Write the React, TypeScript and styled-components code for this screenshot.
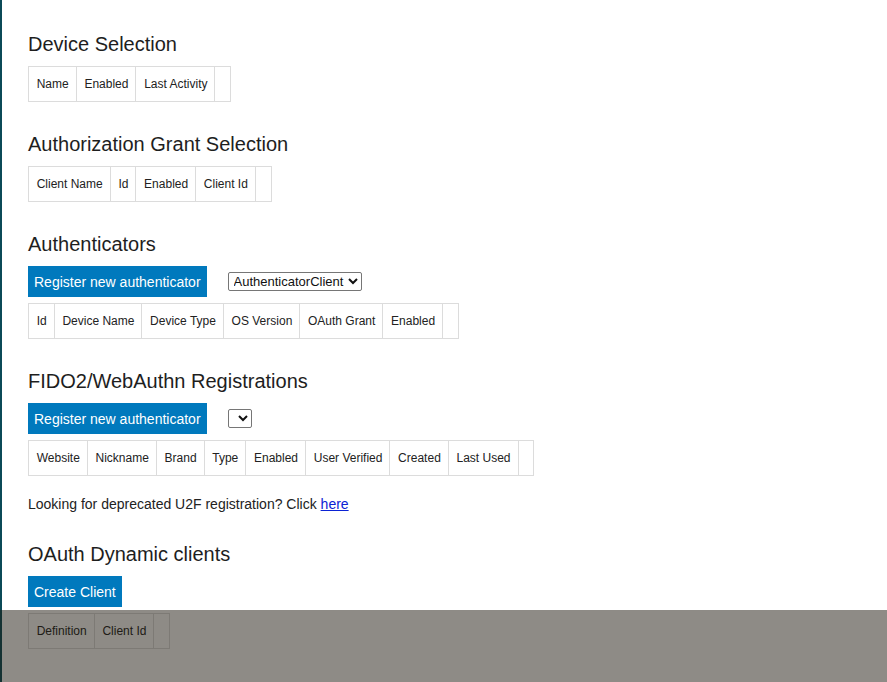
import * as React from 'react'
import styled, { createGlobalStyle } from 'styled-components'

// ___________________________________________________________________

const GlobalStyle = createGlobalStyle`
  html, body {
    margin: 0;
    padding: 0;
    background: #fff;
  }
  body {
    font-family: 'Liberation Sans', Arial, sans-serif;
    color: #222;
  }
`

type Section = {
  title: string
  columns: string[]
  button?: string
  select?: string
}

const sections: Section[] = [
  { title: 'Device Selection', columns: ['Name', 'Enabled', 'Last Activity'] },
  {
    title: 'Authorization Grant Selection',
    columns: ['Client Name', 'Id', 'Enabled', 'Client Id'],
  },
  {
    title: 'Authenticators',
    columns: ['Id', 'Device Name', 'Device Type', 'OS Version', 'OAuth Grant', 'Enabled'],
    button: 'Register new authenticator',
    select: 'AuthenticatorClient',
  },
  {
    title: 'FIDO2/WebAuthn Registrations',
    columns: [
      'Website',
      'Nickname',
      'Brand',
      'Type',
      'Enabled',
      'User Verified',
      'Created',
      'Last Used',
    ],
    button: 'Register new authenticator',
    select: '',
  },
]

const HeaderTable: React.FC<{ columns: string[] }> = ({ columns }) => (
  <Table>
    <tbody>
      <tr>
        {columns.map((c) => (
          <Cell key={c}>{c}</Cell>
        ))}
        <Cell />
      </tr>
    </tbody>
  </Table>
)

const App: React.FC = () => {
  return (
    <Page>
      <GlobalStyle />
      <Content>
        {sections.map((s) => (
          <Block key={s.title}>
            <Heading>{s.title}</Heading>
            {s.button && (
              <Actions>
                <Button>{s.button}</Button>
                <Select defaultValue={s.select}>
                  {s.select ? <option>{s.select}</option> : <option value="" />}
                </Select>
              </Actions>
            )}
            <HeaderTable columns={s.columns} />
          </Block>
        ))}
        <Note>
          Looking for deprecated U2F registration? Click <Link href="#">here</Link>
        </Note>
        <Block>
          <Heading>OAuth Dynamic clients</Heading>
          <Actions>
            <Button>Create Client</Button>
          </Actions>
          <HeaderTable columns={['Definition', 'Client Id']} />
        </Block>
      </Content>
      <Shade />
    </Page>
  )
}

export default App

// ___________________________________________________________________

const Page = styled.div`
  min-height: 100vh;
  border-left: 2px solid #0b4a57;
  box-sizing: border-box;
`

const Content = styled.div`
  display: flex;
  flex-direction: column;
  padding: 32px 26px 40px;
  gap: 30px;
`

const Block = styled.section`
  display: flex;
  flex-direction: column;
  align-items: flex-start;
`

const Heading = styled.h2`
  margin: 0 0 10px;
  font-size: 20px;
  line-height: 24px;
  font-weight: 400;
  color: #1e1e1e;
`

const Actions = styled.div`
  display: flex;
  align-items: center;
  gap: 21px;
  margin-bottom: 6px;
`

const Button = styled.button`
  height: 31px;
  padding: 0 6px;
  border: none;
  background: #0079bd;
  color: #fff;
  font-family: 'Liberation Sans', Arial, sans-serif;
  font-size: 14px;
  cursor: pointer;
`

const Select = styled.select`
  height: 19px;
  min-width: 24px;
  padding: 0 1px;
  border: 1px solid #767676;
  border-radius: 2px;
  background: #fff;
  color: #111;
  font-family: 'Liberation Sans', Arial, sans-serif;
  font-size: 13px;
`

const Table = styled.table`
  border-collapse: collapse;
`

const Cell = styled.td`
  border: 1px solid #dcdcdc;
  padding: 8px 7px 8px 7.7px;
  font-size: 12px;
  line-height: 18px;
  color: #222;
  white-space: nowrap;
`

const Note = styled.p`
  margin: -10px 0 0;
  font-size: 14px;
  line-height: 16px;
  color: #222;
`

const Link = styled.a`
  color: #0b22d4;
  text-decoration: underline;
`

const Shade = styled.div`
  position: fixed;
  left: 0;
  right: 0;
  bottom: 0;
  height: 72px;
  background: rgba(29, 23, 13, 0.5);
`
